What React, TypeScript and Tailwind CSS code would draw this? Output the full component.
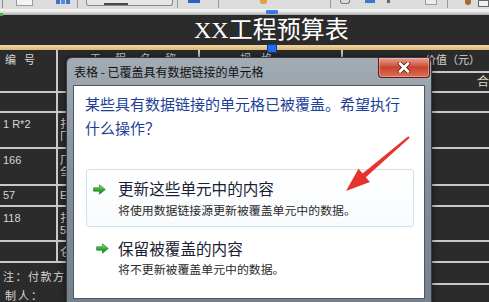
import React from "react";

const cjk = "font-['Noto_Sans_CJK_SC',sans-serif]";
const cellText = "font-['Liberation_Sans','Noto_Sans_CJK_SC',sans-serif] text-[11px] leading-[12px] text-[#d6d6d6]";

function GreenArrow() {
  return (
    <svg width="13" height="11" viewBox="0 0 13 11">
      <defs>
        <linearGradient id="ga" x1="0" y1="0" x2="0" y2="1">
          <stop offset="0" stopColor="#9bee94" />
          <stop offset="0.5" stopColor="#2fb52f" />
          <stop offset="1" stopColor="#137a13" />
        </linearGradient>
      </defs>
      <path
        d="M0.6 3.8 H6.4 V0.8 L12.3 5.5 L6.4 10.2 V7.2 H0.6 Z"
        fill="url(#ga)"
        stroke="#1f6e1f"
        strokeWidth="0.6"
        strokeLinejoin="round"
      />
    </svg>
  );
}

function CloseX() {
  return (
    <svg width="14" height="11" viewBox="0 0 14 11">
      <path d="M3 1.5 L11 9.5 M11 1.5 L3 9.5" stroke="#5a1a10" strokeWidth="4.4" strokeLinecap="round" />
      <path d="M3 1.5 L11 9.5 M11 1.5 L3 9.5" stroke="#ffffff" strokeWidth="2.8" strokeLinecap="round" />
    </svg>
  );
}

function Toolbar() {
  return (
    <div className="h-[9px] bg-[#dcdcdc] flex items-start">
      <div className="ml-[2px] w-px h-[8px] bg-[#8a8a8a]" />
      <div className="ml-[13px] w-[17px] h-[6px] bg-[#f4f4f4] border-x border-b border-[#9a9a9a]" />
      <div className="ml-[23px] w-[15px] h-[5px] flex gap-px">
        <div className="w-[4px] h-[4px] bg-[#3f73c8]" />
        <div className="w-[4px] h-[4px] bg-[#5b8ad6]" />
        <div className="w-[4px] h-[4px] bg-[#3f73c8]" />
      </div>
      <div className="ml-[6px] w-px h-[8px] bg-[#9a9a9a]" />
      <div className="ml-[8px] w-[88px] h-[6px] bg-[#e6e6e6] border-x border-b border-[#8a8a8a] rounded-b-[3px] flex items-end">
        <div className="ml-[17px] w-[24px] h-[2px] bg-[#4a4a4a]" />
      </div>
      <div className="ml-[4px] w-px h-[8px] bg-[#9a9a9a]" />
      <div className="ml-[10px] w-[12px] h-[3px] bg-[#2f62c0]" />
      <div className="ml-[18px] w-px h-[8px] bg-[#9a9a9a]" />
      <div className="ml-[41px] w-[7px] h-[4px] bg-[#e3a23a] rounded-b-[2px]" />
      <div className="ml-[63px] w-px h-[8px] bg-[#9a9a9a]" />
      <div className="ml-[9px] w-[10px] h-[4px] border-x border-b border-[#777] rounded-b-[3px]" />
      <div className="ml-[15px] w-[10px] h-[3px] bg-[#3c74d0]" />
      <div className="ml-[12px] w-[3px] h-[3px] bg-[#666]" />
      <div className="ml-[35px] w-[12px] h-[5px] border-x border-b border-[#9a9a9a] bg-[#ececec]" />
      <div className="ml-[10px] w-px h-[8px] bg-[#9a9a9a]" />
      <div className="ml-[17px] w-[6px] h-[5px] bg-[#a0702a] rounded-b-full" />
      <div className="ml-[7px] w-[11px] h-[7px] border border-[#666] bg-[#f0f0f0]" />
    </div>
  );
}

type Row = { h: number; a?: string; b?: string[]; pt?: number };

const rows: Row[] = [
  { h: 20 },
  { h: 36, a: "1 R*2", b: ["扌", "冂"] },
  { h: 37, a: "166", b: ["厂", "刍"] },
  { h: 21, a: "57", b: ["E"], pt: 3 },
  { h: 35, a: "118", b: ["扌", "5"] },
  { h: 21, b: ["仑"], pt: 4 },
];

function Table() {
  const line = "border-[#c8c8c8]";
  return (
    <div className="flex flex-col">
      {/* header */}
      <div className={`h-[43px] grid grid-cols-[58px_142px_143px_146px] border-b-2 ${line}`}>
        <div className={`border-r-2 ${line} pl-[5px] pt-[4px] ${cellText} tracking-[8px]`}>编号</div>
        <div className={`border-r-2 ${line} pl-[32px] pt-[3px] ${cellText} tracking-[14px]`}>工程名称</div>
        <div className={`border-r-2 ${line} pl-[40px] pt-[3px] ${cellText} tracking-[10px]`}>规格</div>
        <div className="flex flex-col">
          <div className={`h-[23px] border-b-2 ${line} pl-[82px] pt-[4px] ${cellText} whitespace-nowrap`}>价值（元）</div>
          <div className={`pl-[134px] pt-[3px] ${cellText} text-[12px] whitespace-nowrap`}>合</div>
        </div>
      </div>
      {rows.map((r, i) => (
        <div
          key={i}
          className={`grid grid-cols-[58px_142px_143px_146px] border-b-2 ${line}`}
          style={{ height: r.h }}
        >
          <div className={`border-r-2 ${line} pl-[3px] ${cellText}`} style={{ paddingTop: r.pt ?? 5 }}>
            {r.a}
          </div>
          <div className={`border-r-2 ${line} pl-[2px] ${cellText} text-[#9a9a9a]`} style={{ paddingTop: r.pt ?? 5 }}>
            {r.b?.map((t, j) => (
              <div key={j}>{t}</div>
            ))}
          </div>
          <div className={`border-r-2 ${line}`} />
          <div />
        </div>
      ))}
      <div className="h-[22px] grid grid-cols-[343px_146px]">
        <div className={`pl-[3px] pt-[8px] ${cellText} tracking-[1.5px]`}>注：付款方式</div>
        <div className={`border-b-2 ${line}`} />
      </div>
      <div className="h-[17px] grid grid-cols-[343px_146px]">
        <div className={`pl-[5px] pt-[5px] ${cellText} tracking-[2px]`}>制人：</div>
        <div />
      </div>
    </div>
  );
}

function Dialog() {
  return (
    <div className="absolute left-[66px] top-[57px] w-[366px] h-[246px] rounded-t-[6px] border border-[#333d47] bg-gradient-to-b from-[#a3acb4] via-[#848e98] to-[#76818c] shadow-[0_0_6px_rgba(0,0,0,0.6)] flex flex-col px-[6px] pb-[3px]">
      {/* title bar */}
      <div className={`h-[27px] shrink-0 flex items-center pl-px pt-[1px] text-[12px] text-[#111] ${cjk} whitespace-nowrap`}>
        表格 - 已覆盖具有数据链接的单元格
      </div>
      {/* close button */}
      <div className="absolute right-[1px] top-0 w-[52px] h-[20px] rounded-b-[4px] border border-t-0 border-[#5c1e16] bg-gradient-to-b from-[#e7a191] via-[#c9432c] to-[#dd6f56] flex items-center justify-center shadow-[inset_0_0_0_1px_rgba(255,200,190,0.45)]">
        <CloseX />
      </div>
      {/* content */}
      <div className={`flex-1 bg-white border border-[#4d5863] flex flex-col ${cjk} overflow-hidden`}>
        <div className="pl-[11px] pt-[6px] text-[15px] leading-[24px] text-[#1d3f99] whitespace-nowrap">
          某些具有数据链接的单元格已被覆盖。希望执行
          <br />
          什么操作？
        </div>
        <div className="mt-[29px] ml-[12px] w-[328px] h-[58px] rounded-[3px] border border-[#cde2ee] bg-gradient-to-b from-[#ffffff] to-[#f8fbfd] flex">
          <div className="w-[31px] shrink-0 pl-[6px] pt-[14px]">
            <GreenArrow />
          </div>
          <div className="flex flex-col pt-[8px]">
            <div className="text-[15.6px] leading-[20px] text-[#1a1d33] whitespace-nowrap">更新这些单元中的内容</div>
            <div className="mt-[4px] text-[11.9px] leading-[16px] text-[#2a2a2a] whitespace-nowrap">
              将使用数据链接源更新被覆盖单元中的数据。
            </div>
          </div>
        </div>
        <div className="mt-[2px] ml-[12px] w-[328px] h-[58px] border border-transparent flex">
          <div className="w-[31px] shrink-0 pl-[9px] pt-[13px]">
            <GreenArrow />
          </div>
          <div className="flex flex-col pt-[8px]">
            <div className="text-[15.6px] leading-[20px] text-[#1a1d33] whitespace-nowrap">保留被覆盖的内容</div>
            <div className="mt-[3px] text-[11.9px] leading-[16px] text-[#2a2a2a] whitespace-nowrap">
              将不更新被覆盖单元中的数据。
            </div>
          </div>
        </div>
      </div>
    </div>
  );
}

export default function App() {
  return (
    <div className="relative w-[489px] h-[302px] overflow-hidden bg-[#2b2b2b]">
      <Toolbar />
      <div className="h-[6px] bg-gradient-to-b from-[#f6f6f6] via-[#e4e4e4] to-[#a9a9a9]" />
      <div className="h-[30px] flex items-center pl-[194px] text-white text-[24px] leading-none font-['Liberation_Serif','Noto_Sans_CJK_SC',serif] whitespace-nowrap">
        XX工程预算表
      </div>
      <div className="h-[5px] bg-gradient-to-b from-[#f3d9a2] to-[#dbb676]" />
      <Table />

      {/* blue grips (overlays) */}
      <div className="absolute left-[266px] top-[10px] w-[12px] h-[4px] bg-[#3b7be0] rounded-[1px]" />
      <div className="absolute left-[267px] top-[44px] w-[10px] h-[9px] bg-[#1f6ff0] border border-[#0d3f9a]" />
      <div className="absolute left-0 top-[13px] w-[3px] h-[3px] bg-[#46b04a]" />

      <Dialog />

      {/* red annotation arrow */}
      <svg className="absolute left-0 top-0 pointer-events-none" width="489" height="302" viewBox="0 0 489 302">
        <polygon
          points="408.3,136.2 362.6,173.5 358.5,168.8 346,191 369.9,182 365.8,177.3 409.7,137.8"
          fill="#e8322c"
        />
      </svg>
    </div>
  );
}
